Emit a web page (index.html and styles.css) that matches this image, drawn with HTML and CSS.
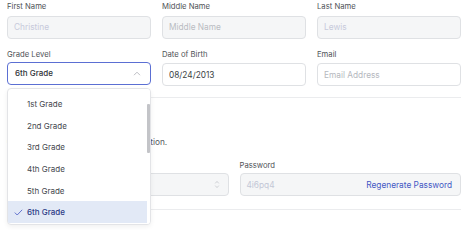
FILE: index.html
```html
<!DOCTYPE html>
<html lang="en">
<head>
    <meta charset="UTF-8">
    <meta name="viewport" content="width=device-width, initial-scale=1.0">
    <title>Edit Student</title>
    <link rel="stylesheet" href="styles.css">
</head>
<body>
    <div class="form">
        <div class="row three">
            <div class="field">
                <label>First Name</label>
                <input class="input" type="text" value="Christine" disabled>
            </div>
            <div class="field">
                <label>Middle Name</label>
                <input class="input" type="text" placeholder="Middle Name" disabled>
            </div>
            <div class="field">
                <label>Last Name</label>
                <input class="input" type="text" value="Lewis" disabled>
            </div>
        </div>

        <div class="row three">
            <div class="field">
                <label>Grade Level</label>
                <div class="select-wrap">
                    <div class="select open">
                        <span>6th Grade</span>
                        <svg class="chevron" width="8" height="5" viewBox="0 0 8 5"><path d="M1 4.2 L4 1.2 L7 4.2" fill="none" stroke="#b4b6bc" stroke-width="0.9"/></svg>
                    </div>
                    <div class="menu">
                        <ul class="options">
                            <li>1st Grade</li>
                            <li>2nd Grade</li>
                            <li>3rd Grade</li>
                            <li>4th Grade</li>
                            <li>5th Grade</li>
                            <li class="selected">
                                <svg class="check" width="9" height="7" viewBox="0 0 9 7"><path d="M0.8 3.6 L3.2 6 L8.2 0.8" fill="none" stroke="#5567c9" stroke-width="0.9"/></svg>
                                6th Grade
                            </li>
                        </ul>
                        <div class="track"><div class="thumb"></div></div>
                    </div>
                </div>
            </div>
            <div class="field">
                <label>Date of Birth</label>
                <input class="input" type="text" value="08/24/2013">
            </div>
            <div class="field">
                <label>Email</label>
                <input class="input" type="text" placeholder="Email Address">
            </div>
        </div>

        <hr>

        <div class="section">
            <h3>Login</h3>
            <p>Credentials used in the class application.</p>
            <div class="row two">
                <div class="field">
                    <label>PIN</label>
                    <div class="input disabled with-addon">
                        <span></span>
                        <svg class="stepper" width="6" height="9" viewBox="0 0 6 9"><path d="M1.2 3.4 L3 1.4 L4.8 3.4 M1.2 5.6 L3 7.6 L4.8 5.6" fill="none" stroke="#c4c6cb" stroke-width="0.8"/></svg>
                    </div>
                </div>
                <div class="field">
                    <label>Password</label>
                    <div class="input disabled with-addon">
                        <span class="muted">4i6pq4</span>
                        <a href="#" class="link">Regenerate Password</a>
                    </div>
                </div>
            </div>
        </div>

        <hr>
    </div>
</body>
</html>
```

FILE: styles.css
```css
body {
    margin: 0;
    font-family: Inter, 'Noto Sans', sans-serif;
    background: #ffffff;
    color: #333;
}

.form {
    padding: 2px 6px 30px 7px;
}

.row {
    display: grid;
    gap: 11px;
    margin-bottom: 11px;
}

.three {
    grid-template-columns: 1fr 1fr 1fr;
}

.two {
    grid-template-columns: 1fr 1fr;
    margin-bottom: 13px;
}

.field label {
    display: block;
    font-size: 7.7px;
    line-height: 10px;
    color: #4f5257;
    margin-bottom: 2px;
}

.input {
    box-sizing: border-box;
    width: 100%;
    height: 23px;
    margin: 0;
    padding: 0 6px;
    border: 1px solid #dfe1e4;
    border-radius: 4px;
    background: #fff;
    font-family: inherit;
    font-size: 8.3px;
    color: #3c3f44;
    outline: none;
}

.input::placeholder {
    color: #b5b8be;
}

.input:disabled,
.input.disabled {
    background: #f5f6f7;
    color: #c7cadb;
}

.input:disabled::placeholder {
    color: #b9bcc2;
}

.with-addon {
    display: flex;
    align-items: center;
    justify-content: space-between;
}

.muted {
    color: #c3c7d6;
}

.link {
    color: #4358c4;
    text-decoration: none;
    font-size: 8.3px;
    margin-right: 2px;
}

.stepper {
    margin-right: 2px;
}

.select-wrap {
    position: relative;
}

.select {
    box-sizing: border-box;
    height: 23px;
    display: flex;
    align-items: center;
    justify-content: space-between;
    padding: 0 9px 0 7px;
    border: 1px solid #dfe1e4;
    border-radius: 4px;
    font-size: 8px;
    font-weight: 500;
    color: #2f3237;
}

.select.open {
    border: 1.5px solid #5b6fd3;
}

.menu {
    position: absolute;
    top: 26px;
    left: 0;
    right: 0;
    height: 137px;
    box-sizing: border-box;
    display: flex;
    background: #fff;
    border: 1px solid #e3e4e7;
    border-radius: 4px;
    box-shadow: 0 2px 5px rgba(0, 0, 0, 0.06);
    overflow: hidden;
    z-index: 10;
}

.options {
    flex: 1;
    list-style: none;
    margin: 0;
    padding: 5px 0 0 0;
}

.options li {
    height: 21.6px;
    display: flex;
    align-items: center;
    padding-left: 19px;
    font-size: 8px;
    color: #45484e;
}

.options li.selected {
    background: #e2e9f6;
    color: #2c3a86;
    font-weight: 500;
    padding-left: 6px;
}

.check {
    margin-right: 4px;
}

.track {
    width: 3.5px;
    background: #fff;
}

.thumb {
    margin-top: 15px;
    height: 49px;
    background: #c3c4c8;
    border-radius: 1px;
}

hr {
    border: none;
    border-top: 1px solid #ebecee;
    margin: 0;
}

.row + hr {
    margin-top: 3px;
}

.section {
    padding-top: 12px;
}

.section h3 {
    margin: 0 0 12px;
    font-size: 11px;
    line-height: 14px;
    font-weight: 600;
    color: #2f3237;
}

.section p {
    margin: 0 0 13px;
    font-size: 8.3px;
    line-height: 12px;
    color: #55585d;
}
```
